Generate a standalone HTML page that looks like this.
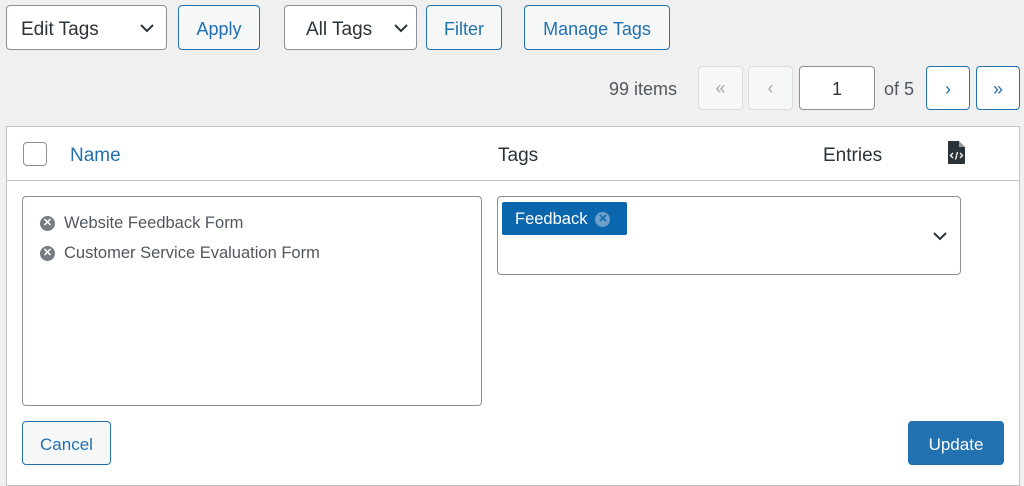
<!DOCTYPE html>
<html><head><style>
*{box-sizing:border-box;margin:0;padding:0}
body{width:1024px;height:479px;background:#f0f0f1;font-family:"Liberation Sans",sans-serif;color:#3c434a;position:relative;overflow:hidden}
.a{position:absolute}
.sel{background:#fff;border:1px solid #8c8f94;border-radius:4px;font-size:19px;color:#2c3338;display:flex;align-items:center;padding-left:14px;padding-top:4px}
.btn{background:#f6f7f7;border:1px solid #2271b1;border-radius:4px;color:#2271b1;font-size:18px;display:flex;align-items:center;justify-content:center;padding-top:3px}
.dis{background:#f6f7f7;border:1px solid #dcdcde;border-radius:4px;color:#a7aaad;font-size:18px;display:flex;align-items:center;justify-content:center}
.chev{position:absolute;right:12px;top:50%;margin-top:-5px}
.x{display:inline-block;width:15px;height:15px;border-radius:50%;background:#787c82;color:#fff;font-size:11px;line-height:15px;text-align:center;font-weight:bold;vertical-align:middle;margin-right:9px}
</style></head><body>
<div class="a sel" style="left:6px;top:5px;width:161px;height:45px">Edit Tags<svg class="chev" width="14" height="10" viewBox="0 0 14 10"><path d="M1 2l6 6 6-6" stroke="#2c3338" stroke-width="2" fill="none"/></svg></div>
<div class="a btn" style="left:178px;top:5px;width:82px;height:45px">Apply</div>
<div class="a sel" style="left:284px;top:5px;width:133px;height:45px;padding-left:21px">All Tags<svg class="chev" width="14" height="10" viewBox="0 0 14 10" style="right:8px"><path d="M1 2l6 6 6-6" stroke="#2c3338" stroke-width="2" fill="none"/></svg></div>
<div class="a btn" style="left:426px;top:5px;width:76px;height:45px">Filter</div>
<div class="a btn" style="left:524px;top:5px;width:146px;height:45px">Manage Tags</div>

<div class="a" style="left:609px;top:79px;font-size:18px;color:#50575e">99 items</div>
<div class="a dis" style="left:698px;top:66px;width:45px;height:44px">«</div>
<div class="a dis" style="left:748px;top:66px;width:45px;height:44px">‹</div>
<div class="a" style="left:799px;top:66px;width:76px;height:44px;background:#fff;border:1px solid #8c8f94;border-radius:4px;font-size:18px;color:#2c3338;text-align:center;line-height:44px">1</div>
<div class="a" style="left:884px;top:79px;font-size:18px;color:#50575e">of 5</div>
<div class="a btn" style="left:926px;top:66px;width:44px;height:44px;background:#fff">›</div>
<div class="a btn" style="left:976px;top:66px;width:44px;height:44px;background:#fff">»</div>

<div class="a" style="left:6px;top:126px;width:1014px;height:360px;background:#fff;border:1px solid #c3c4c7"></div>
<div class="a" style="left:7px;top:180px;width:1012px;height:1px;background:#c3c4c7"></div>
<div class="a" style="left:23px;top:142px;width:24px;height:24px;border:1px solid #8c8f94;border-radius:4px;background:#fff"></div>
<div class="a" style="left:70px;top:145px;font-size:19px;color:#2271b1">Name</div>
<div class="a" style="left:498px;top:145px;font-size:19px;color:#2c3338">Tags</div>
<div class="a" style="left:823px;top:145px;font-size:19px;color:#2c3338">Entries</div>
<svg class="a" style="left:947px;top:140px" width="19" height="25" viewBox="0 0 19 25"><path d="M1 1h11l6 6v16a1 1 0 0 1-1 1H1z" fill="#2c3338"/><path d="M12 1v6h6" fill="#fff" opacity=".5"/><path d="M6 13l-2.5 2.5L6 18M13 13l2.5 2.5L13 18M10.5 12l-2 7.5" stroke="#fff" stroke-width="1.3" fill="none"/></svg>

<div class="a" style="left:22px;top:196px;width:460px;height:210px;border:1px solid #8c8f94;border-radius:4px;background:#fff;padding:11px 0 0 17px;font-size:16.5px;color:#50575e;line-height:30px">
<div><span class="x">✕</span>Website Feedback Form</div>
<div><span class="x">✕</span>Customer Service Evaluation Form</div>
</div>
<div class="a" style="left:497px;top:196px;width:464px;height:79px;border:1px solid #8c8f94;border-radius:4px;background:#fff"></div>
<div class="a" style="left:502px;top:202px;width:125px;height:33px;background:#0a67ae;border-radius:2px;color:#fff;font-size:16.5px;line-height:34px;padding-left:13px">Feedback<span class="x" style="margin-left:8px;background:#6d9fcc;color:#0a67ae;margin-right:0">✕</span></div>
<svg class="a" style="left:932px;top:231px" width="16" height="11" viewBox="0 0 16 11"><path d="M2 2l6 6 6-6" stroke="#2c3338" stroke-width="2" fill="none"/></svg>

<div class="a btn" style="left:22px;top:421px;width:89px;height:44px;font-size:17px">Cancel</div>
<div class="a btn" style="left:908px;top:421px;width:96px;height:44px;background:#2271b1;color:#fff;font-size:17px">Update</div>
</body></html>
